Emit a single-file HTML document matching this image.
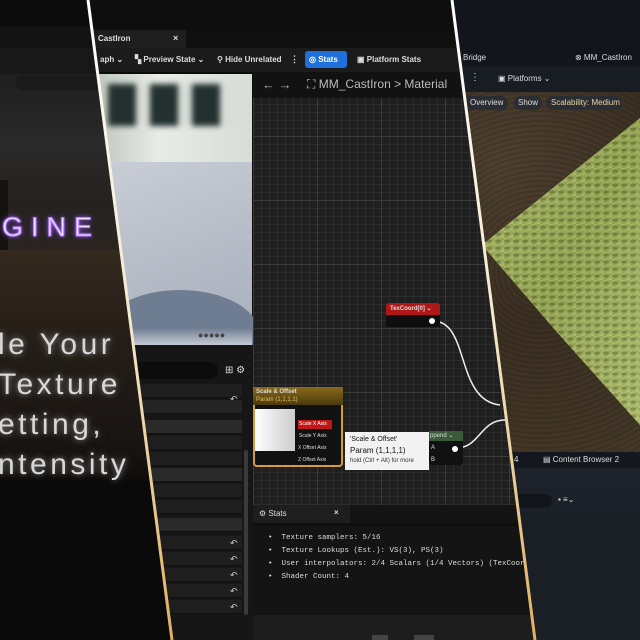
<!DOCTYPE html>
<html><head><meta charset="utf-8"><style>
*{margin:0;padding:0;box-sizing:border-box}
body{width:640px;height:640px;overflow:hidden;background:#0b0b0b;font-family:"Liberation Sans",sans-serif;position:relative}
.p{position:absolute;left:0;top:0;width:640px;height:640px;overflow:hidden}
.a{position:absolute}
.t{position:absolute;white-space:nowrap;color:#ddd;font-size:8px}
.grid{background-color:#1f1f1f;background-image:linear-gradient(#3a3a3a 1px,transparent 1px),linear-gradient(90deg,#3a3a3a 1px,transparent 1px),linear-gradient(#2c2c2c 1px,transparent 1px),linear-gradient(90deg,#2c2c2c 1px,transparent 1px);background-size:64px 64px,64px 64px,8px 8px,8px 8px}
.row{position:absolute;left:96px;width:146px;height:14px;background:#1e1e1e;border-bottom:1px solid #111}
.u{position:absolute;left:230px;color:#ccc;font-size:9px}
.big{position:absolute;font-size:30px;letter-spacing:3.5px;color:#d8d8d8;text-shadow:0 0 6px rgba(255,255,255,.45),0 0 14px rgba(180,180,180,.25);white-space:nowrap}
</style></head><body>

<!-- LEFT PANEL -->
<div class="p" style="clip-path:polygon(0 0,88px 0,172px 640px,0 640px)">
 <div class="a" style="left:0;top:0;width:200px;height:26px;background:#0c0c0c"></div>
 <div class="a" style="left:0;top:26px;width:200px;height:22px;background:#131313"></div>
 <div class="a" style="left:0;top:48px;width:200px;height:26px;background:#181818"></div>
 <div class="a" style="left:0;top:74px;width:200px;height:180px;background:linear-gradient(#1f1f1f,#2a2a2a 40%,#252220 70%,#2a2520)"></div>
 <div class="a" style="left:16px;top:76px;width:100px;height:14px;border-radius:7px;background:#1a1a1a"></div>
 <div class="a" style="left:0;top:180px;width:8px;height:170px;background:#151311"></div>
 <div class="a" style="left:0;top:250px;width:200px;height:90px;background:linear-gradient(#33291f,#261e17)"></div>
 <div class="a" style="left:0;top:330px;width:200px;height:150px;background:linear-gradient(#261f19,#181412 80%,#0e0c0b)"></div>
 <div class="a" style="left:0;top:480px;width:200px;height:160px;background:#0b0a0a"></div>
 <div class="t" style="left:2px;top:212px;font-size:27px;letter-spacing:8px;color:#f0e4ff;text-shadow:0 0 3px #a060f0,0 0 6px #8040e0;-webkit-text-stroke:1px #b27cff">GINE</div>
 <div class="big" style="left:-2px;top:328px">le Your</div>
 <div class="big" style="left:-2px;top:368px">Texture</div>
 <div class="big" style="left:-2px;top:408px">etting,</div>
 <div class="big" style="left:-2px;top:448px">ntensity</div>
</div>

<!-- MIDDLE PANEL -->
<div class="p" style="clip-path:polygon(88px 0,452px 0,535px 640px,172px 640px)">
 <div class="a" style="left:80px;top:0;width:460px;height:30px;background:#0e0e0e"></div>
 <div class="a" style="left:80px;top:30px;width:460px;height:18px;background:#101010"></div>
 <div class="a" style="left:80px;top:30px;width:106px;height:18px;background:#1e1e1e"></div>
 <div class="t" style="left:98px;top:34px;font-size:8px;font-weight:bold">CastIron</div>
 <div class="t" style="left:173px;top:33px;font-size:9px;font-weight:bold">×</div>
 <div class="a" style="left:80px;top:48px;width:460px;height:24px;background:#1b1b1b"></div>
 <div class="t" style="left:100px;top:55px;font-size:8px;font-weight:bold">aph ⌄</div>
 <div class="t" style="left:135px;top:55px;font-size:8px;font-weight:bold">▚ Preview State ⌄</div>
 <div class="t" style="left:217px;top:55px;font-size:8px;font-weight:bold">⚲ Hide Unrelated</div>
 <div class="t" style="left:290px;top:54px;font-size:9px;font-weight:bold">⋮</div>
 <div class="a" style="left:305px;top:51px;width:42px;height:17px;background:#1f6fdc;border-radius:3px"></div>
 <div class="t" style="left:309px;top:55px;font-size:8px;font-weight:bold;color:#fff">◎ Stats</div>
 <div class="t" style="left:357px;top:55px;font-size:8px;font-weight:bold">▣ Platform Stats</div>
 <div class="a" style="left:96px;top:74px;width:156px;height:88px;background:linear-gradient(90deg,#bfc6bf,#e8ebe6 40%,#d8ddd6)"></div>
 <div class="a" style="left:108px;top:84px;width:125px;height:42px;background:repeating-linear-gradient(90deg,#22302f 0 28px,#d8dcd7 28px 42px);filter:blur(3px)"></div>
 <div class="a" style="left:96px;top:162px;width:156px;height:183px;background:linear-gradient(160deg,#c9ced6,#b3bac5 60%,#a8b0bc)"></div>
 <div class="a" style="left:100px;top:290px;width:160px;height:90px;border-radius:50%;background:#6f7d92"></div>
 <div class="a" style="left:96px;top:328px;width:156px;height:17px;background:linear-gradient(transparent,#c4cad4)"></div>
 <div class="t" style="left:198px;top:330px;font-size:9px;color:#444">●●●●●</div>
 <div class="a" style="left:96px;top:345px;width:157px;height:295px;background:#161616"></div>
 <div class="a" style="left:96px;top:362px;width:122px;height:17px;background:#0c0c0c;border-radius:8px"></div>
 <div class="t" style="left:225px;top:365px;font-size:10px">⊞ ⚙</div>
 <div class="row" style="top:384px"></div><div class="u" style="top:394px">↶</div>
 <div class="row" style="top:400px;background:#242424"></div>
 <div class="row" style="top:420px;background:#2a2a2a"></div>
 <div class="row" style="top:436px"></div>
 <div class="row" style="top:452px"></div>
 <div class="row" style="top:468px;background:#2a2a2a"></div>
 <div class="row" style="top:484px"></div>
 <div class="row" style="top:500px"></div>
 <div class="row" style="top:518px;background:#2a2a2a"></div>
 <div class="row" style="top:536px"></div><div class="u" style="top:538px">↶</div>
 <div class="row" style="top:552px"></div><div class="u" style="top:554px">↶</div>
 <div class="row" style="top:568px"></div><div class="u" style="top:570px">↶</div>
 <div class="row" style="top:584px"></div><div class="u" style="top:586px">↶</div>
 <div class="row" style="top:600px"></div><div class="u" style="top:602px">↶</div>
 <div class="a" style="left:244px;top:450px;width:4px;height:165px;background:#3a3a3a;border-radius:2px"></div>
 <div class="a grid" style="left:253px;top:72px;width:290px;height:433px"></div>
 <div class="a" style="left:253px;top:72px;width:290px;height:26px;background:#121212"></div>
 <div class="t" style="left:262px;top:77px;font-size:13px;color:#aaa">←  →</div>
 <div class="t" style="left:307px;top:77px;font-size:12px;color:#bbb">⛶ MM_CastIron &gt; Material</div>
 <svg class="a" style="left:0;top:0" width="640" height="640"><path d="M433 321 C470 321,455 400,500 405" stroke="#eee" stroke-width="1.5" fill="none"/><path d="M456 448 C480 448,480 420,505 420" stroke="#eee" stroke-width="1.5" fill="none"/></svg>
 <div class="a" style="left:386px;top:303px;width:54px;height:12px;background:#b01818;border-radius:3px 3px 0 0"></div>
 <div class="t" style="left:390px;top:305px;font-size:6px;font-weight:bold">TexCoord[0]  ⌄</div>
 <div class="a" style="left:386px;top:315px;width:54px;height:12px;background:#0e0e0e"></div>
 <div class="a" style="left:429px;top:318px;width:6px;height:6px;border-radius:50%;background:#fff"></div>
 <div class="a" style="left:253px;top:387px;width:90px;height:80px;background:#111;border:2px solid #d99a3a;border-radius:4px"></div>
 <div class="a" style="left:253px;top:387px;width:90px;height:18px;background:linear-gradient(#8a6a1a,#4a3a10)"></div>
 <div class="t" style="left:256px;top:389px;font-size:6px;font-weight:bold">Scale &amp; Offset</div>
 <div class="t" style="left:256px;top:397px;font-size:6px;color:#e8c060">Param (1,1,1,1)</div>
 <div class="a" style="left:255px;top:409px;width:40px;height:42px;background:linear-gradient(90deg,#fff,#ccc)"></div>
 <div class="a" style="left:298px;top:420px;width:34px;height:9px;background:#c01818"></div>
 <div class="t" style="left:299px;top:421px;font-size:5px;color:#fff">Scale X Axis</div>
 <div class="t" style="left:299px;top:433px;font-size:5px">Scale Y Axis</div>
 <div class="t" style="left:298px;top:445px;font-size:5px">X Offset Axis</div>
 <div class="t" style="left:298px;top:457px;font-size:5px">Z Offset Axis</div>
 <div class="a" style="left:345px;top:432px;width:84px;height:38px;background:#f2f2f2"></div>
 <div class="t" style="left:350px;top:436px;font-size:7px;color:#111">'Scale &amp; Offset'</div>
 <div class="t" style="left:350px;top:446px;font-size:8px;color:#111">Param (1,1,1,1)</div>
 <div class="t" style="left:350px;top:458px;font-size:6px;color:#333">hold (Ctrl + Alt) for more</div>
 <div class="a" style="left:429px;top:431px;width:34px;height:34px;background:#111;border-radius:3px"></div>
 <div class="a" style="left:429px;top:431px;width:34px;height:10px;background:#3a5a3a"></div>
 <div class="t" style="left:430px;top:432px;font-size:6px">ppend ⌄</div>
 <div class="t" style="left:431px;top:445px;font-size:6px">A</div>
 <div class="t" style="left:431px;top:457px;font-size:6px">B</div>
 <div class="a" style="left:452px;top:446px;width:6px;height:6px;border-radius:50%;background:#fff"></div>
 <div class="a" style="left:253px;top:505px;width:290px;height:110px;background:#141414"></div>
 <div class="a" style="left:253px;top:505px;width:97px;height:18px;background:#1e1e1e"></div>
 <div class="t" style="left:259px;top:509px;font-size:8px">⚙ Stats</div>
 <div class="t" style="left:334px;top:508px;font-size:8px;font-weight:bold">×</div>
 <div class="a" style="left:253px;top:523px;width:290px;height:3px;background:#0e0e0e"></div>
 <div style="position:absolute;left:268px;top:532px;font-family:'Liberation Mono',monospace;font-size:7.5px;color:#ddd;line-height:13px;white-space:pre">•  Texture samplers: 5/16
•  Texture Lookups (Est.): VS(3), PS(3)
•  User interpolators: 2/4 Scalars (1/4 Vectors) (TexCoords: 2
•  Shader Count: 4</div>
 <div class="a" style="left:253px;top:615px;width:290px;height:25px;background:#1d1d1d"></div>
 <div class="a" style="left:372px;top:635px;width:16px;height:5px;background:#444"></div>
 <div class="a" style="left:414px;top:635px;width:20px;height:5px;background:#444"></div>
</div>

<!-- RIGHT PANEL -->
<div class="p" style="clip-path:polygon(452px 0,640px 0,640px 640px,535px 640px)">
 <div class="a" style="left:440px;top:0;width:200px;height:66px;background:#12151b"></div>
 <div class="t" style="left:463px;top:53px;font-size:8px">Bridge</div>
 <div class="t" style="left:575px;top:53px;font-size:8px">⊗ MM_CastIron</div>
 <div class="a" style="left:440px;top:66px;width:200px;height:26px;background:#181c23"></div>
 <div class="t" style="left:470px;top:72px;font-size:10px">⋮</div>
 <div class="t" style="left:498px;top:74px;font-size:8px">▣ Platforms ⌄</div>
 <div class="a" style="left:440px;top:92px;width:200px;height:360px;background:radial-gradient(circle at 30% 20%,#4e4030,#3a2f22 50%,#443827);"></div>
 <div class="a" style="left:440px;top:92px;width:200px;height:360px;background:repeating-radial-gradient(circle at 50% 50%,rgba(0,0,0,.12) 0 2px,transparent 2px 5px)"></div>
 <svg class="a" style="left:0;top:0" width="640" height="640"><defs><linearGradient id="g" x1="0" y1="0" x2="1" y2="1"><stop offset="0" stop-color="#b9c77a"/><stop offset=".5" stop-color="#8a9a4a"/><stop offset="1" stop-color="#c2cf85"/></linearGradient><pattern id="n" width="9" height="7" patternUnits="userSpaceOnUse"><rect width="9" height="7" fill="url(#g)"/><ellipse cx="3" cy="3" rx="3" ry="1.6" fill="#2e3a12" opacity=".55"/></pattern></defs><polygon points="482,245 640,118 640,425 555,330" fill="url(#g)"/><polygon points="482,245 640,118 640,425 555,330" fill="url(#n)" opacity=".6"/></svg>
 <div class="a" style="left:460px;top:96px;width:48px;height:14px;border-radius:7px;background:#2a2d33"></div>
 <div class="t" style="left:470px;top:98px;font-size:8px">Overview</div>
 <div class="a" style="left:514px;top:96px;width:28px;height:14px;border-radius:7px;background:#2a2d33"></div>
 <div class="t" style="left:518px;top:98px;font-size:8px">Show</div>
 <div class="a" style="left:546px;top:96px;width:76px;height:14px;border-radius:7px;background:#2a2d33"></div>
 <div class="t" style="left:551px;top:98px;font-size:8px;color:#e8d7a0">Scalability: Medium</div>
 <div class="a" style="left:440px;top:452px;width:200px;height:188px;background:#1c2129"></div>
 <div class="a" style="left:440px;top:452px;width:200px;height:16px;background:#14181e"></div>
 <div class="t" style="left:514px;top:455px;font-size:8px">4</div>
 <div class="t" style="left:543px;top:455px;font-size:8px">▤ Content Browser 2</div>
 <div class="a" style="left:440px;top:468px;width:200px;height:20px;background:#1e232b"></div>
 <div class="a" style="left:500px;top:494px;width:52px;height:14px;border-radius:7px;background:#12161c"></div>
 <div class="t" style="left:558px;top:495px;font-size:8px">▪ ≡⌄</div>
 <div class="a" style="left:440px;top:512px;width:200px;height:128px;background:#1a1e25"></div>
</div>

<svg class="a" style="left:0;top:0" width="640" height="640"><defs><linearGradient id="l" x1="0" y1="0" x2="0" y2="1"><stop offset="0" stop-color="#fff"/><stop offset=".5" stop-color="#f4e8cc"/><stop offset="1" stop-color="#e0b060"/></linearGradient></defs><line x1="88" y1="0" x2="172" y2="640" stroke="url(#l)" stroke-width="3"/><line x1="452" y1="0" x2="535" y2="640" stroke="url(#l)" stroke-width="3"/></svg>
</body></html>
